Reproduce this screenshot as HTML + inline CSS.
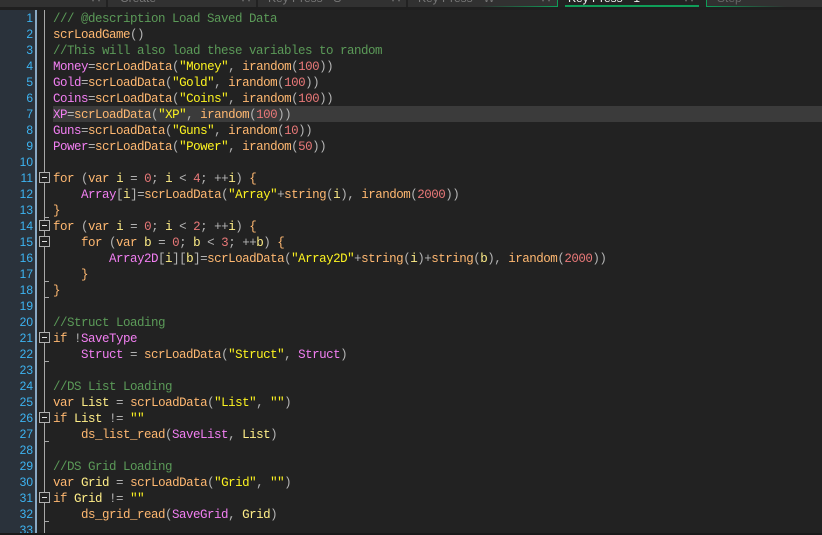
<!DOCTYPE html>
<html><head><meta charset="utf-8">
<style>
html,body{margin:0;padding:0;width:822px;height:535px;overflow:hidden;background:#222222}
#r{position:relative;width:822px;height:535px;overflow:hidden;background:#222222;font-family:"Liberation Mono",monospace;font-size:12.5px;letter-spacing:-0.5px}
.a{position:absolute}
.t{position:absolute;top:0;height:7px;background:#313131;overflow:hidden;font-family:"Liberation Sans",sans-serif;font-size:12px;letter-spacing:0;color:#777}
.t b{position:absolute;font-weight:normal;top:-9px;line-height:14px;white-space:pre}
.n{position:absolute;left:0;width:33px;height:16px;line-height:17px;text-align:right;color:#3db4f2;font-family:"Liberation Sans",sans-serif;font-size:12px;letter-spacing:0}
.l{position:absolute;left:53px;height:16px;line-height:18px;white-space:pre;color:#b4b4b4}
.c{color:#5b9a58}.f{color:#ffb871}.v{color:#f27ff2}.s{color:#fcf320}.d{color:#e87878}.k{color:#ffb871}.o{color:#ffee88}
.b{position:absolute;left:39px;width:9px;height:9px;border:1px solid #b0b0b0;background:#222}
.b:after{content:"";position:absolute;left:2px;top:4px;width:5px;height:1px;background:#e0e0e0}
.h{position:absolute;left:45px;width:4px;height:1px;background:#a8a8a8}
</style></head><body><div id="r">
<div class="a" style="left:0;top:7px;width:822px;height:3px;background:#1f1f1f"></div>
<div class="t" style="left:0;width:106px"><b style="left:90px">▾▾</b></div>
<div class="t" style="left:108px;width:148px"><b style="left:12px">Create</b><b style="left:132px">▾▾</b></div>
<div class="t" style="left:258px;width:148px"><b style="left:10px">Key Press - S</b><b style="left:132px">▾▾</b></div>
<div class="t" style="left:408px;width:149px"><b style="left:10px">Key Press - W</b><b style="left:132px">▾▾</b></div>
<div class="a" style="left:480px;top:6px;width:77px;height:1px;background:linear-gradient(90deg,#313131,#0f9d58)"></div>
<div class="a" style="left:557px;top:0;width:1px;height:7px;background:#0f9d58"></div>
<div class="t" style="left:565px;width:134px;background:#222;height:5px;color:#eee"><b style="left:3px">Key Press - 1</b><b style="left:118px;color:#777">▾▾</b></div>
<div class="a" style="left:565px;top:5px;width:134px;height:2px;background:#0f9d58"></div>
<div class="t" style="left:706px;width:116px"><b style="left:11px;color:#666">Step</b></div>
<div class="a" style="left:706px;top:0;width:1px;height:7px;background:#0f9d58"></div>
<div class="a" style="left:706px;top:6px;width:80px;height:1px;background:linear-gradient(90deg,#0f9d58,#313131)"></div>
<div class="a" style="left:0;top:10px;width:35px;height:523px;background:#2a323b"></div>
<div class="a" style="left:35px;top:10px;width:2px;height:523px;background:#8aa9c4"></div>
<div class="a" style="left:44px;top:10px;width:1px;height:523px;background:#a8a8a8"></div>
<div class="a" style="left:53px;top:106px;width:769px;height:16px;background:#3b3b3b"></div>
<div class="a" style="left:0;top:533px;width:822px;height:2px;background:#1a1a1a"></div>

<div class="n" style="top:10px">1</div><div class="n" style="top:26px">2</div><div class="n" style="top:42px">3</div><div class="n" style="top:58px">4</div><div class="n" style="top:74px">5</div><div class="n" style="top:90px">6</div><div class="n" style="top:106px">7</div><div class="n" style="top:122px">8</div><div class="n" style="top:138px">9</div><div class="n" style="top:154px">10</div><div class="n" style="top:170px">11</div><div class="n" style="top:186px">12</div><div class="n" style="top:202px">13</div><div class="n" style="top:218px">14</div><div class="n" style="top:234px">15</div><div class="n" style="top:250px">16</div><div class="n" style="top:266px">17</div><div class="n" style="top:282px">18</div><div class="n" style="top:298px">19</div><div class="n" style="top:314px">20</div><div class="n" style="top:330px">21</div><div class="n" style="top:346px">22</div><div class="n" style="top:362px">23</div><div class="n" style="top:378px">24</div><div class="n" style="top:394px">25</div><div class="n" style="top:410px">26</div><div class="n" style="top:426px">27</div><div class="n" style="top:442px">28</div><div class="n" style="top:458px">29</div><div class="n" style="top:474px">30</div><div class="n" style="top:490px">31</div><div class="n" style="top:506px">32</div><div class="n" style="top:522px;height:11px;overflow:hidden">33</div>

<div class="b" style="top:172px"></div><div class="b" style="top:220px"></div><div class="b" style="top:236px"></div><div class="b" style="top:332px"></div><div class="b" style="top:412px"></div><div class="b" style="top:492px"></div>
<div class="h" style="top:217px"></div><div class="h" style="top:281px"></div><div class="h" style="top:297px"></div><div class="h" style="top:361px"></div><div class="h" style="top:441px"></div><div class="h" style="top:521px"></div>

<div class="l" style="top:10px"><span class="c">/// @description Load Saved Data</span></div>
<div class="l" style="top:26px"><span class="f">scrLoadGame</span>()</div>
<div class="l" style="top:42px"><span class="c">//This will also load these variables to random</span></div>
<div class="l" style="top:58px"><span class="v">Money</span>=<span class="f">scrLoadData</span>(<span class="s">"Money"</span>, <span class="f">irandom</span>(<span class="d">100</span>))</div>
<div class="l" style="top:74px"><span class="v">Gold</span>=<span class="f">scrLoadData</span>(<span class="s">"Gold"</span>, <span class="f">irandom</span>(<span class="d">100</span>))</div>
<div class="l" style="top:90px"><span class="v">Coins</span>=<span class="f">scrLoadData</span>(<span class="s">"Coins"</span>, <span class="f">irandom</span>(<span class="d">100</span>))</div>
<div class="l" style="top:106px"><span class="v">XP</span>=<span class="f">scrLoadData</span>(<span class="s">"XP"</span>, <span class="f">irandom</span>(<span class="d">100</span>))</div>
<div class="l" style="top:122px"><span class="v">Guns</span>=<span class="f">scrLoadData</span>(<span class="s">"Guns"</span>, <span class="f">irandom</span>(<span class="d">10</span>))</div>
<div class="l" style="top:138px"><span class="v">Power</span>=<span class="f">scrLoadData</span>(<span class="s">"Power"</span>, <span class="f">irandom</span>(<span class="d">50</span>))</div>
<div class="l" style="top:170px"><span class="k">for</span> (<span class="k">var</span> <span class="o">i</span> = <span class="d">0</span>; <span class="o">i</span> &lt; <span class="d">4</span>; ++<span class="o">i</span>) <span class="k">{</span></div>
<div class="l" style="top:186px">    <span class="v">Array</span>[<span class="o">i</span>]=<span class="f">scrLoadData</span>(<span class="s">"Array"</span>+<span class="f">string</span>(<span class="o">i</span>), <span class="f">irandom</span>(<span class="d">2000</span>))</div>
<div class="l" style="top:202px"><span class="k">}</span></div>
<div class="l" style="top:218px"><span class="k">for</span> (<span class="k">var</span> <span class="o">i</span> = <span class="d">0</span>; <span class="o">i</span> &lt; <span class="d">2</span>; ++<span class="o">i</span>) <span class="k">{</span></div>
<div class="l" style="top:234px">    <span class="k">for</span> (<span class="k">var</span> <span class="o">b</span> = <span class="d">0</span>; <span class="o">b</span> &lt; <span class="d">3</span>; ++<span class="o">b</span>) <span class="k">{</span></div>
<div class="l" style="top:250px">        <span class="v">Array2D</span>[<span class="o">i</span>][<span class="o">b</span>]=<span class="f">scrLoadData</span>(<span class="s">"Array2D"</span>+<span class="f">string</span>(<span class="o">i</span>)+<span class="f">string</span>(<span class="o">b</span>), <span class="f">irandom</span>(<span class="d">2000</span>))</div>
<div class="l" style="top:266px">    <span class="k">}</span></div>
<div class="l" style="top:282px"><span class="k">}</span></div>
<div class="l" style="top:314px"><span class="c">//Struct Loading</span></div>
<div class="l" style="top:330px"><span class="k">if</span> !<span class="v">SaveType</span></div>
<div class="l" style="top:346px">    <span class="v">Struct</span> = <span class="f">scrLoadData</span>(<span class="s">"Struct"</span>, <span class="v">Struct</span>)</div>
<div class="l" style="top:378px"><span class="c">//DS List Loading</span></div>
<div class="l" style="top:394px"><span class="k">var</span> <span class="o">List</span> = <span class="f">scrLoadData</span>(<span class="s">"List"</span>, <span class="s">""</span>)</div>
<div class="l" style="top:410px"><span class="k">if</span> <span class="o">List</span> != <span class="s">""</span></div>
<div class="l" style="top:426px">    <span class="f">ds_list_read</span>(<span class="v">SaveList</span>, <span class="o">List</span>)</div>
<div class="l" style="top:458px"><span class="c">//DS Grid Loading</span></div>
<div class="l" style="top:474px"><span class="k">var</span> <span class="o">Grid</span> = <span class="f">scrLoadData</span>(<span class="s">"Grid"</span>, <span class="s">""</span>)</div>
<div class="l" style="top:490px"><span class="k">if</span> <span class="o">Grid</span> != <span class="s">""</span></div>
<div class="l" style="top:506px">    <span class="f">ds_grid_read</span>(<span class="v">SaveGrid</span>, <span class="o">Grid</span>)</div>
</div></body></html>
